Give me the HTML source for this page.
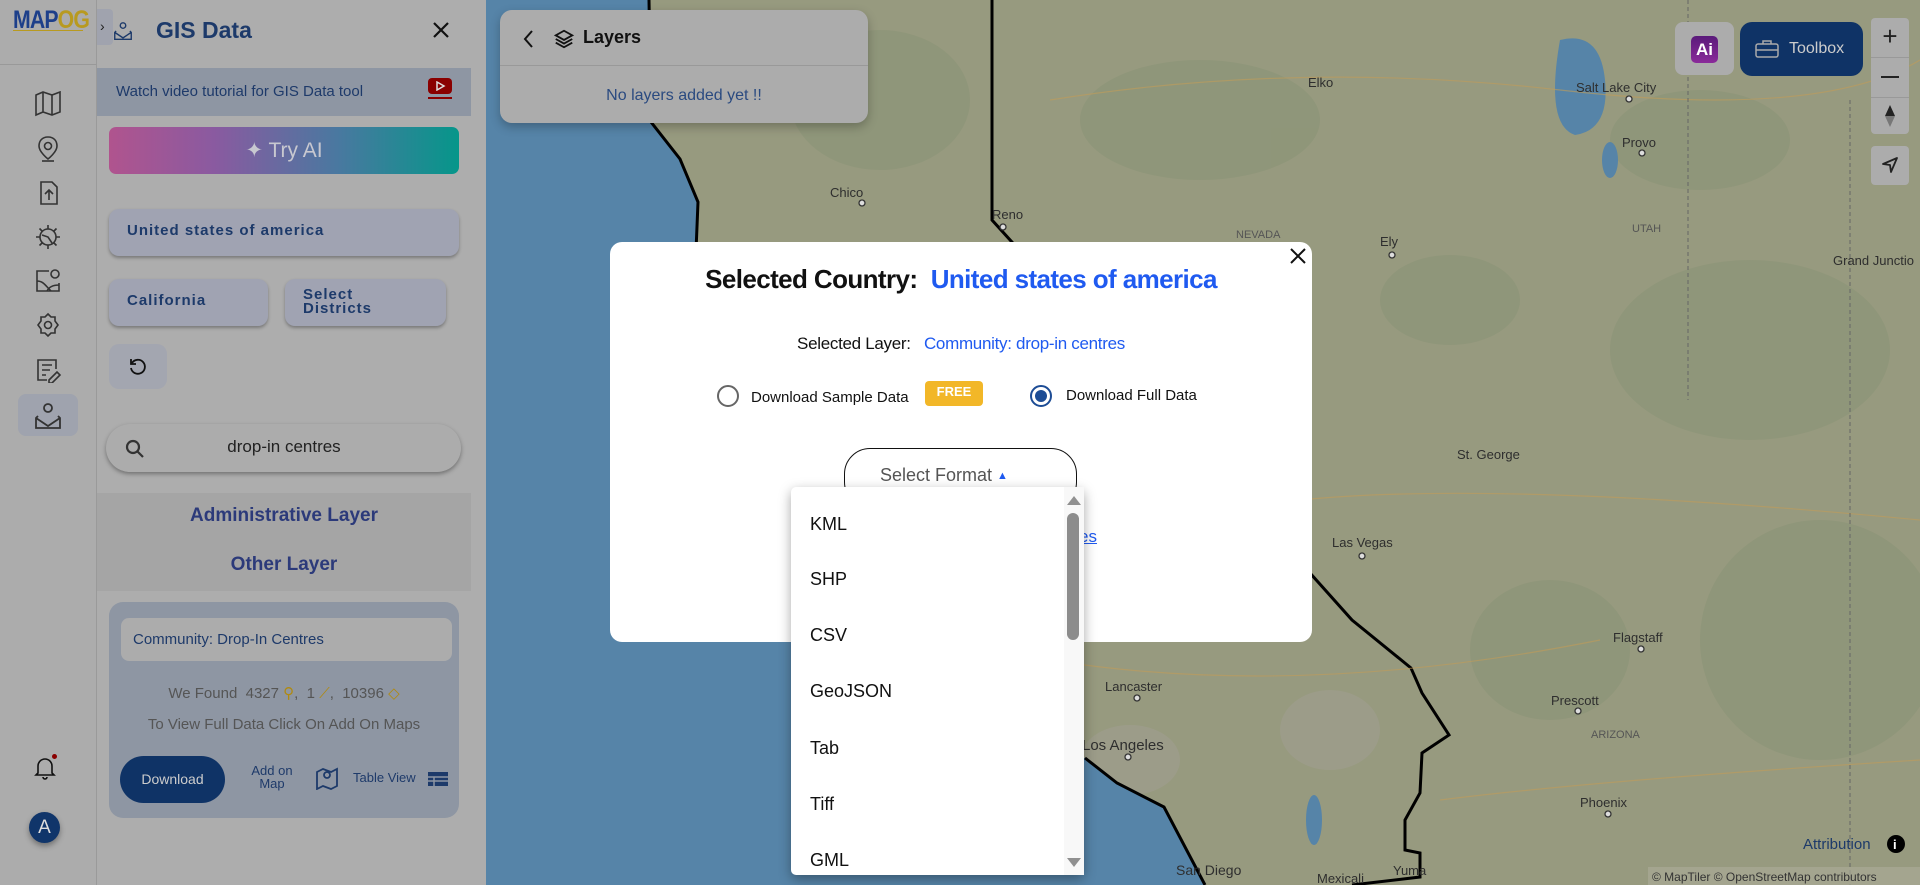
<!DOCTYPE html>
<html><head><meta charset="utf-8">
<style>
*{box-sizing:border-box;margin:0;padding:0}
body{width:1920px;height:885px;overflow:hidden;position:relative;font-family:"Liberation Sans",sans-serif;background:#979a7f}
.abs{position:absolute}
.rail{left:0;top:0;width:97px;height:885px;background:#acacac;border-right:1px solid #9a9a9a}
.panel{left:97px;top:0;width:389px;height:885px;background:#adadad}
.btn{position:absolute;background:#a0a3b2;border-radius:10px;box-shadow:0 2px 3px rgba(0,0,0,.3);color:#1d3a6a;font-weight:bold;letter-spacing:1px;font-size:15px}
.mlbl{font-family:"Liberation Sans",sans-serif;font-size:13px;fill:#2e2e2e}
.item{position:absolute;left:19px;font-size:18px;color:#111}
.ri{position:absolute;left:34px}
</style></head><body>

<!-- MAP -->
<svg class="abs" style="left:486px;top:0" width="1434" height="885" viewBox="486 0 1434 885">
<rect x="486" y="0" width="1434" height="885" fill="#979a7f"/>
<g fill="#8a9476" opacity=".6">
<ellipse cx="1200" cy="120" rx="120" ry="60"/><ellipse cx="1750" cy="350" rx="140" ry="90"/>
<ellipse cx="1820" cy="640" rx="120" ry="120"/><ellipse cx="1550" cy="650" rx="80" ry="70"/>
<ellipse cx="880" cy="100" rx="90" ry="70"/><ellipse cx="1700" cy="140" rx="90" ry="50"/>
<ellipse cx="1450" cy="300" rx="70" ry="45"/>
</g>
<g fill="#a09e90" opacity=".6"><ellipse cx="1330" cy="730" rx="50" ry="40"/><ellipse cx="1130" cy="760" rx="50" ry="35"/></g>
<polygon fill="#5684a8" points="486,0 649,0 651,122 680,159 698,202 696,251 720,330 740,420 780,520 830,600 900,680 1000,740 1085,758 1117,783 1164,807 1205,885 486,885"/>
<polyline fill="none" stroke="#000" stroke-width="3" points="649,0 651,122 680,159 698,202 696,251"/>
<polyline fill="none" stroke="#000" stroke-width="3" points="1085,758 1117,783 1164,807 1205,885"/>
<polyline fill="none" stroke="#000" stroke-width="3" points="992,0 992,220 1200,450 1352,620 1411,668 1422,693 1449,735 1422,753 1420,793 1405,820 1405,850 1420,853 1420,877 1352,885"/>
<g fill="#5684a8"><path d="M1560 40 q40-10 45 40 q5 50-30 55 q-30-10-15-95z"/><ellipse cx="1610" cy="160" rx="8" ry="18"/><ellipse cx="1314" cy="820" rx="8" ry="25"/></g>
<g stroke="#c29c58" stroke-width="1.2" fill="none" opacity=".6">
<path d="M1050 100 Q1300 60 1560 90 T1920 60"/><path d="M1300 500 Q1500 480 1920 520"/><path d="M1050 660 Q1300 700 1600 640"/><path d="M1440 800 Q1600 780 1920 760"/>
</g>
<g stroke="#666" stroke-width="1" stroke-dasharray="4 3" fill="none"><path d="M1688 0 V400"/><path d="M1850 100 V885"/></g>
<g class="mlbl">
<text x="1308" y="87">Elko</text><text x="1576" y="92">Salt Lake City</text><text x="1622" y="147">Provo</text>
<text x="830" y="197">Chico</text><text x="992" y="219">Reno</text><text x="1236" y="238" font-size="11" fill="#555">NEVADA</text>
<text x="1632" y="232" font-size="11" fill="#555">UTAH</text><text x="1380" y="246">Ely</text><text x="1833" y="265">Grand Junctio</text>
<text x="1457" y="459">St. George</text><text x="1332" y="547">Las Vegas</text><text x="1613" y="642">Flagstaff</text>
<text x="1551" y="705">Prescott</text><text x="1591" y="738" font-size="11" fill="#555">ARIZONA</text><text x="1580" y="807">Phoenix</text>
<text x="1105" y="691">Lancaster</text><text x="1082" y="750" font-size="15">Los Angeles</text><text x="1176" y="875" font-size="14">San Diego</text>
<text x="1317" y="883">Mexicali</text><text x="1393" y="875">Yuma</text>
</g>
<g fill="#ddd" stroke="#333" stroke-width="1.3"><circle cx="1629" cy="99" r="3"/><circle cx="1642" cy="153" r="3"/><circle cx="1137" cy="698" r="3"/><circle cx="1128" cy="757" r="3"/><circle cx="1641" cy="649" r="3"/><circle cx="1578" cy="711" r="3"/><circle cx="1608" cy="814" r="3"/><circle cx="1003" cy="227" r="3"/><circle cx="862" cy="203" r="3"/><circle cx="1392" cy="255" r="3"/><circle cx="1362" cy="556" r="3"/></g>
<text x="1803" y="849" font-size="15" fill="#1d3a6a">Attribution</text>
<circle cx="1896" cy="844" r="9" fill="#000"/><text x="1893" y="849" font-size="13" fill="#fff" font-weight="bold">i</text>
<rect x="1648" y="867" width="272" height="18" fill="#a9aa96" opacity=".7"/>
<text x="1652" y="881" font-size="12" fill="#333">© MapTiler © OpenStreetMap contributors</text>
</svg>

<!-- Layers panel -->
<div class="abs" style="left:500px;top:10px;width:368px;height:113px;background:#acacac;border-radius:12px;box-shadow:0 4px 10px rgba(0,0,0,.25)">
 <div style="height:56px;border-bottom:1px solid #999;position:relative">
  <svg class="abs" style="left:22px;top:19px" width="14" height="20"><path d="M10 2 L3 10 L10 18" stroke="#111" stroke-width="2" fill="none"/></svg>
  <svg class="abs" style="left:53px;top:18px" width="22" height="22" viewBox="0 0 24 24" fill="none" stroke="#111" stroke-width="2"><path d="M12 3 L21 8 L12 13 L3 8Z"/><path d="M3 12 L12 17 L21 12"/><path d="M3 16 L12 21 L21 16"/></svg>
  <div class="abs" style="left:83px;top:17px;font-size:18px;font-weight:bold;color:#111">Layers</div>
 </div>
 <div style="text-align:center;margin-top:21px;font-size:16px;color:#2a4a80">No layers added yet !!</div>
</div>

<!-- Top right -->
<div class="abs" style="left:1675px;top:22px;width:59px;height:53px;background:#acacac;border-radius:8px"></div>
<div class="abs" style="left:1691px;top:36px;width:27px;height:27px;border-radius:5px;background:linear-gradient(#5a1a7a,#8a2a9a);color:#fff;font-size:17px;text-align:center;line-height:27px;font-weight:bold">Ai</div>
<div class="abs" style="left:1740px;top:22px;width:123px;height:54px;background:#0f3366;border-radius:12px;color:#ccc;font-size:16px;line-height:54px;padding-left:49px">Toolbox</div>
<svg class="abs" style="left:1755px;top:40px" width="24" height="18" viewBox="0 0 24 18" fill="none" stroke="#aaa" stroke-width="1.5"><rect x="1" y="4" width="22" height="13" rx="2"/><path d="M8 4V1h8v3M1 10h22"/></svg>
<div class="abs" style="left:1871px;top:18px;width:38px;height:116px;background:#acacac;border-radius:4px"></div>
<div class="abs" style="left:1871px;top:57px;width:38px;height:1px;background:#999"></div>
<div class="abs" style="left:1871px;top:97px;width:38px;height:1px;background:#999"></div>
<div class="abs" style="left:1878px;top:21px;width:24px;font-size:26px;text-align:center;color:#222">+</div>
<div class="abs" style="left:1881px;top:76px;width:18px;height:2px;background:#222"></div>
<svg class="abs" style="left:1882px;top:103px" width="16" height="26"><path d="M8 2 L13 13 H3Z" fill="#222"/><path d="M8 24 L13 13 H3Z" fill="#777"/></svg>
<div class="abs" style="left:1871px;top:146px;width:38px;height:39px;background:#acacac;border-radius:4px"></div>
<svg class="abs" style="left:1880px;top:155px" width="20" height="20" viewBox="0 0 20 20"><path d="M17 3 L3 9 L10 10 L11 17Z" fill="none" stroke="#222" stroke-width="1.8" stroke-linejoin="round"/></svg>

<!-- Rail -->
<div class="abs rail">
 <div class="abs" style="left:13px;top:6px;font-size:25px;font-weight:bold;letter-spacing:-1px;color:#1d3f8a;transform:scaleX(.85);transform-origin:left">MAP<span style="color:#b89a20">OG</span></div>
 <div class="abs" style="left:13px;top:30px;width:70px;height:1px;background:#b89a20"></div>
 <div class="abs" style="left:0;top:64px;width:97px;height:1px;background:#999"></div>
 <div class="abs" style="left:18px;top:394px;width:60px;height:42px;background:#9fa3ae;border-radius:8px"></div>
 <svg class="ri" style="top:91px" width="28" height="26" viewBox="0 0 28 26" fill="none" stroke="#333" stroke-width="1.6"><path d="M2 4 L9 1 L18 4 L26 1 V21 L18 24 L9 21 L2 24Z M9 1V21 M18 4V24"/></svg>
 <svg class="ri" style="top:135px" width="28" height="28" viewBox="0 0 28 28" fill="none" stroke="#333" stroke-width="1.6"><path d="M14 2 c-6 0-9 4-9 9 c0 6 9 13 9 13 s9-7 9-13 c0-5-3-9-9-9z"/><circle cx="14" cy="11" r="3.5"/><path d="M8 26 h12"/></svg>
 <svg class="ri" style="top:180px" width="28" height="26" viewBox="0 0 28 26" fill="none" stroke="#333" stroke-width="1.6"><path d="M7 2 h11 l5 5 v17 h-16z M15 20 v-10 M11 14 l4-4 4 4"/></svg>
 <svg class="ri" style="top:223px" width="28" height="28" viewBox="0 0 28 28" fill="none" stroke="#333" stroke-width="1.6"><circle cx="14" cy="14" r="8"/><path d="M14 2v4M14 22v4M2 14h4M22 14h4M5.5 5.5l3 3M22.5 5.5l-3 3M5.5 22.5l3-3M22.5 22.5l-3-3M8 12 l6 2 4 6"/></svg>
 <svg class="ri" style="top:268px" width="28" height="26" viewBox="0 0 28 26" fill="none" stroke="#333" stroke-width="1.6"><path d="M15 3 H3 v20 h22 v-8 M3 13 c6 0 8 4 14 10 M13 23 c2-4 6-6 12-6"/><circle cx="21" cy="6" r="4"/></svg>
 <svg class="ri" style="top:312px" width="28" height="26" viewBox="0 0 28 26" fill="none" stroke="#333" stroke-width="1.6"><circle cx="14" cy="13" r="3.5"/><path d="M14 2 l3 3 h4 v4 l3 4 -3 4 v4 h-4 l-3 3 -3-3 h-4 v-4 l-3-4 3-4 v-4 h4z"/></svg>
 <svg class="ri" style="top:357px" width="28" height="26" viewBox="0 0 28 26" fill="none" stroke="#333" stroke-width="1.6"><path d="M22 12 V3 H4 v20 h9 M8 8h10 M8 13h8 M8 18h4 M15 23 l8-8 3 3 -8 8 h-3z"/></svg>
 <svg class="ri" style="top:400px" width="28" height="32" viewBox="0 0 28 32" fill="none" stroke="#333" stroke-width="1.8"><circle cx="14" cy="8" r="4"/><path d="M4 16 L2 18 V28 H26 V18 L24 16 M2 18 L14 26 L26 18"/></svg>
 <svg class="abs" style="left:34px;top:756px" width="22" height="24" viewBox="0 0 22 24" fill="none" stroke="#111" stroke-width="1.6"><path d="M4 17 V10 a7 7 0 0 1 14 0 V17 L20 19 H2Z M9 21 a2 2 0 0 0 4 0"/></svg>
 <div class="abs" style="left:52px;top:754px;width:5px;height:5px;border-radius:50%;background:#8a0000"></div>
 <div class="abs" style="left:29px;top:812px;width:31px;height:31px;border-radius:50%;background:#10356a;color:#ddd;font-size:19px;text-align:center;line-height:31px;box-shadow:0 3px 6px rgba(0,0,0,.35)">A</div>
</div>

<!-- Panel -->
<div class="abs panel">
 <div class="abs" style="left:0;top:9px;width:16px;height:36px;background:#a0a3ae;border-radius:0 4px 4px 0;font-size:14px;color:#222;padding-left:3px;line-height:34px">›</div>
 <svg class="abs" style="left:15px;top:20px" width="22" height="22" viewBox="0 0 28 32" fill="none" stroke="#1d3a6a" stroke-width="2"><circle cx="14" cy="8" r="4"/><path d="M4 16 L2 18 V28 H26 V18 L24 16 M2 18 L14 26 L26 18"/></svg>
 <div class="abs" style="left:59px;top:17px;font-size:23px;font-weight:bold;color:#1d3a6a">GIS Data</div>
 <svg class="abs" style="left:335px;top:21px" width="18" height="18"><path d="M2 2L16 16M16 2L2 16" stroke="#111" stroke-width="2.2"/></svg>
 <div class="abs" style="left:0;top:68px;width:374px;height:48px;background:#8e96a3"></div>
 <div class="abs" style="left:19px;top:83px;font-size:15px;color:#1e3a6a">Watch video tutorial for GIS Data tool</div>
 <div class="abs" style="left:331px;top:78px;width:24px;height:16px;background:#8a0000;border-radius:4px"></div>
 <svg class="abs" style="left:339px;top:81px" width="10" height="10"><path d="M1 1L8 5L1 9Z" fill="none" stroke="#ddd" stroke-width="1.5"/></svg>
 <div class="abs" style="left:331px;top:97px;width:24px;height:2px;background:#8a0000"></div>
 <div class="abs" style="left:12px;top:127px;width:350px;height:47px;border-radius:7px;background:linear-gradient(90deg,#b0548e,#8a5aa0 30%,#4a78a0 65%,#06968a);color:#c8c8d0;font-size:21px;text-align:center;line-height:47px">✦ Try AI</div>
 <div class="btn" style="left:12px;top:209px;width:350px;height:47px;line-height:44px;padding-left:18px">United states of america</div>
 <div class="btn" style="left:12px;top:279px;width:159px;height:47px;line-height:44px;padding-left:18px">California</div>
 <div class="btn" style="left:188px;top:279px;width:161px;height:47px;line-height:14px;padding:9px 0 0 18px">Select<br>Districts</div>
 <div class="abs" style="left:12px;top:344px;width:58px;height:45px;background:#a3a6b0;border-radius:10px"></div>
 <svg class="abs" style="left:31px;top:357px" width="20" height="20" viewBox="0 0 20 20" fill="none" stroke="#111" stroke-width="1.8"><path d="M4 6 A7 7 0 1 1 3 11"/><path d="M3 2 V7 H8"/></svg>
 <div class="abs" style="left:9px;top:424px;width:355px;height:48px;background:#acacac;border-radius:24px;box-shadow:0 2px 4px rgba(0,0,0,.35)"></div>
 <svg class="abs" style="left:28px;top:439px" width="20" height="20" fill="none" stroke="#333" stroke-width="2.2"><circle cx="8" cy="8" r="6"/><path d="M12.5 12.5 L18 18"/></svg>
 <div class="abs" style="left:0;top:437px;width:374px;text-align:center;font-size:17px;color:#222">drop-in centres</div>
 <div class="abs" style="left:0;top:493px;width:374px;height:98px;background:#a5a5a5"></div>
 <div class="abs" style="left:0;top:505px;width:374px;text-align:center;font-size:19px;font-weight:bold;color:#2c3a7a">Administrative Layer</div>
 <div class="abs" style="left:0;top:554px;width:374px;text-align:center;font-size:19px;font-weight:bold;color:#2c3a7a">Other Layer</div>
 <div class="abs" style="left:12px;top:602px;width:350px;height:216px;background:#8e96a3;border-radius:14px"></div>
 <div class="abs" style="left:24px;top:618px;width:331px;height:43px;background:#acacac;border-radius:8px;font-size:15px;color:#1e3a6a;line-height:43px;padding-left:12px">Community: Drop-In Centres</div>
 <div class="abs" style="left:0;top:684px;width:374px;text-align:center;font-size:15px;color:#555">We Found &nbsp;4327 <span style="color:#b08a10">⚲</span>, &nbsp;1 <span style="color:#b08a10">⟋</span>, &nbsp;10396 <span style="color:#b08a10">◇</span></div>
 <div class="abs" style="left:0;top:716px;width:374px;text-align:center;font-size:15px;color:#555">To View Full Data Click On Add On Maps</div>
 <div class="abs" style="left:23px;top:756px;width:105px;height:47px;background:#0f3366;border-radius:24px;color:#ccc;font-size:14px;text-align:center;line-height:47px">Download</div>
 <div class="abs" style="left:150px;top:764px;width:50px;text-align:center;font-size:13px;line-height:13px;color:#1e3a6a">Add on<br>Map</div>
 <svg class="abs" style="left:218px;top:766px" width="24" height="24" viewBox="0 0 24 24" fill="none" stroke="#1d3a6a" stroke-width="1.8"><path d="M2 6 L8 3 L16 6 L22 3 V20 L16 23 L8 20 L2 23Z"/><circle cx="12" cy="9" r="3"/></svg>
 <div class="abs" style="left:256px;top:770px;font-size:13px;color:#1e3a6a">Table View</div>
 <svg class="abs" style="left:330px;top:771px" width="22" height="16"><rect x="1" y="1" width="20" height="14" fill="#1d3a6a"/><path d="M1 6H21M1 10H21M7 6V15" stroke="#8e96a3" stroke-width="1.5"/></svg>
</div>

<!-- Dialog -->
<div class="abs" style="left:610px;top:242px;width:702px;height:400px;background:#fff;border-radius:12px">
 <svg class="abs" style="left:679px;top:5px" width="18" height="18"><path d="M2 2L16 16M16 2L2 16" stroke="#111" stroke-width="2"/></svg>
 <div class="abs" style="left:0;top:22px;width:702px;text-align:center;font-size:26px;font-weight:bold;color:#111;letter-spacing:-0.6px">Selected Country:&nbsp; <span style="color:#1f5af0">United states of america</span></div>
 <div class="abs" style="left:0;top:92px;width:702px;text-align:center;font-size:17px;color:#111;letter-spacing:-0.3px">Selected Layer:&nbsp;&nbsp; <span style="color:#1f5af0">Community: drop-in centres</span></div>
 <div class="abs" style="left:107px;top:143px;width:22px;height:22px;border-radius:50%;border:2px solid #666"></div>
 <div class="abs" style="left:141px;top:147px;font-size:15px;color:#111">Download Sample Data</div>
 <div class="abs" style="left:315px;top:139px;width:58px;height:25px;background:#f2b728;border-radius:4px;color:#fff;font-weight:bold;font-size:13px;text-align:center;line-height:22px">FREE</div>
 <div class="abs" style="left:420px;top:143px;width:22px;height:22px;border-radius:50%;border:2px solid #1d4c95"></div>
 <div class="abs" style="left:425px;top:148px;width:12px;height:12px;border-radius:50%;background:#1d4c95"></div>
 <div class="abs" style="left:456px;top:145px;font-size:15px;color:#111">Download Full Data</div>
 <div class="abs" style="left:234px;top:206px;width:233px;height:60px;border:1.5px solid #111;border-radius:26px"></div>
 <div class="abs" style="left:270px;top:223px;font-size:18px;color:#555">Select Format <span style="color:#1f5af0;font-size:11px;vertical-align:2px">▲</span></div>
 <div class="abs" style="left:469px;top:285px;font-size:17px;color:#1f5af0;text-decoration:underline">es</div>
</div>

<!-- Dropdown -->
<div class="abs" style="left:791px;top:487px;width:293px;height:388px;background:#fff;border-radius:5px;box-shadow:0 4px 12px rgba(0,0,0,.35)">
 <div class="abs" style="right:0;top:0;width:20px;height:388px;background:#f8f8f8"></div>
 <div class="abs" style="left:276px;top:9px;width:0;height:0;border-left:7px solid transparent;border-right:7px solid transparent;border-bottom:9px solid #909090"></div>
 <div class="abs" style="left:276px;top:26px;width:12px;height:127px;background:#8c8c8c;border-radius:6px"></div>
 <div class="abs" style="left:276px;top:371px;width:0;height:0;border-left:7px solid transparent;border-right:7px solid transparent;border-top:9px solid #909090"></div>
 <div class="item" style="top:27px">KML</div>
 <div class="item" style="top:82px">SHP</div>
 <div class="item" style="top:138px">CSV</div>
 <div class="item" style="top:194px">GeoJSON</div>
 <div class="item" style="top:251px">Tab</div>
 <div class="item" style="top:307px">Tiff</div>
 <div class="item" style="top:363px">GML</div>
</div>
</body></html>
